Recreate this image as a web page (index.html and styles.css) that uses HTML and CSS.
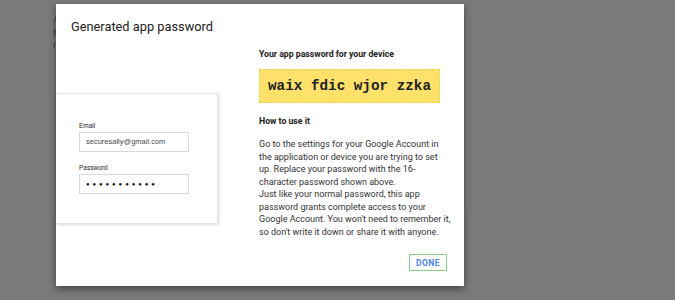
FILE: index.html
```html
<!DOCTYPE html>
<html lang="en">
<head>
    <meta charset="UTF-8">
    <meta name="viewport" content="width=device-width, initial-scale=1.0">
    <title>Generated app password</title>
    <link rel="stylesheet" href="styles.css">
</head>
<body>
    <div class="page-card">
        <p>A</p>
        <p>M</p>
        <p>r</p>
    </div>

    <div class="dialog">
        <h1 class="dialog-title">Generated app password</h1>

        <div class="dialog-content">
            <div class="illustration">
                <div class="login-card">
                    <label class="field-label">Email</label>
                    <div class="field">securesally@gmail.com</div>
                    <label class="field-label">Password</label>
                    <div class="field dots">&#9679;&#9679;&#9679;&#9679;&#9679;&#9679;&#9679;&#9679;&#9679;&#9679;&#9679;</div>
                </div>
            </div>

            <div class="info">
                <h2>Your app password for your device</h2>
                <div class="app-password">waix fdic wjor zzka</div>
                <h2 class="how-to">How to use it</h2>
                <p>Go to the settings for your Google Account in the application or device you are trying to set up. Replace your password with the 16-character password shown above.<br>Just like your normal password, this app password grants complete access to your Google Account. You won't need to remember it, so don't write it down or share it with anyone.</p>
                <div class="actions">
                    <button class="done-button">DONE</button>
                </div>
            </div>
        </div>
    </div>
</body>
</html>
```

FILE: styles.css
```css
body {
    margin: 0;
    width: 675px;
    height: 300px;
    overflow: hidden;
    background-color: #7a7a7a;
    font-family: Roboto, "Liberation Sans", sans-serif;
}
.page-card {
    position: absolute;
    left: 52px;
    top: 14px;
    width: 414px;
    height: 197px;
    border: 1px solid #838383;
    border-top: none;
}
.page-card p {
    margin: 0;
    font-size: 9px;
    line-height: 12.5px;
    color: #3e3e3e;
}
.dialog {
    position: absolute;
    left: 56px;
    top: 4px;
    width: 408px;
    height: 282px;
    background-color: #fff;
    box-shadow: 0 3px 8px rgba(0, 0, 0, 0.45);
}
.dialog-title {
    margin: 0;
    padding: 13px 15px 0;
    font-size: 12.8px;
    font-weight: 400;
    line-height: 20px;
    color: #212121;
}
.dialog-content {
    display: flex;
    gap: 41px;
    padding-top: 10px;
}
.illustration {
    width: 162px;
    margin-top: 46px;
}
.login-card {
    height: 131px;
    box-sizing: border-box;
    padding: 28px 0 0 23px;
    border: 1px solid #e4e4e4;
    border-left: none;
    box-shadow: 1px 1px 3px rgba(0, 0, 0, 0.15);
    font-family: "Liberation Sans", Arial, sans-serif;
}
.field-label {
    display: block;
    font-size: 6.5px;
    line-height: 8px;
    color: #222;
    margin-bottom: 2px;
}
.field {
    width: 110px;
    height: 20px;
    box-sizing: border-box;
    border: 1px solid #d9d9d9;
    padding: 0 6px;
    font-size: 7.5px;
    line-height: 18px;
    color: #4a4a4a;
    margin-bottom: 12px;
}
.field.dots {
    font-size: 6px;
    letter-spacing: 2.9px;
    color: #111;
}
.info {
    width: 192px;
}
.info h2 {
    margin: 0;
    font-size: 8.7px;
    font-weight: 700;
    line-height: 14px;
    color: #212121;
}
.app-password {
    margin-top: 8px;
    width: 181px;
    height: 34px;
    box-sizing: border-box;
    background-color: #fee16a;
    border: 1px dashed #f1d24f;
    font-family: "Liberation Mono", "Courier New", monospace;
    font-size: 14.3px;
    font-weight: 700;
    line-height: 32px;
    padding-left: 8px;
    color: #222;
}
.info .how-to {
    margin-top: 11px;
}
.info p {
    margin: 10px 0 0;
    font-size: 9px;
    line-height: 12.5px;
    color: #333;
}
.actions {
    display: flex;
    justify-content: flex-end;
    margin-top: 16px;
    padding-right: 4px;
}
.done-button {
    width: 38px;
    height: 17px;
    padding: 0;
    background: #fff;
    border: 1px solid #88cc88;
    color: #4285f4;
    font-family: Roboto, "Liberation Sans", sans-serif;
    font-size: 8.5px;
    font-weight: 700;
    letter-spacing: 0.4px;
    cursor: pointer;
}
```
